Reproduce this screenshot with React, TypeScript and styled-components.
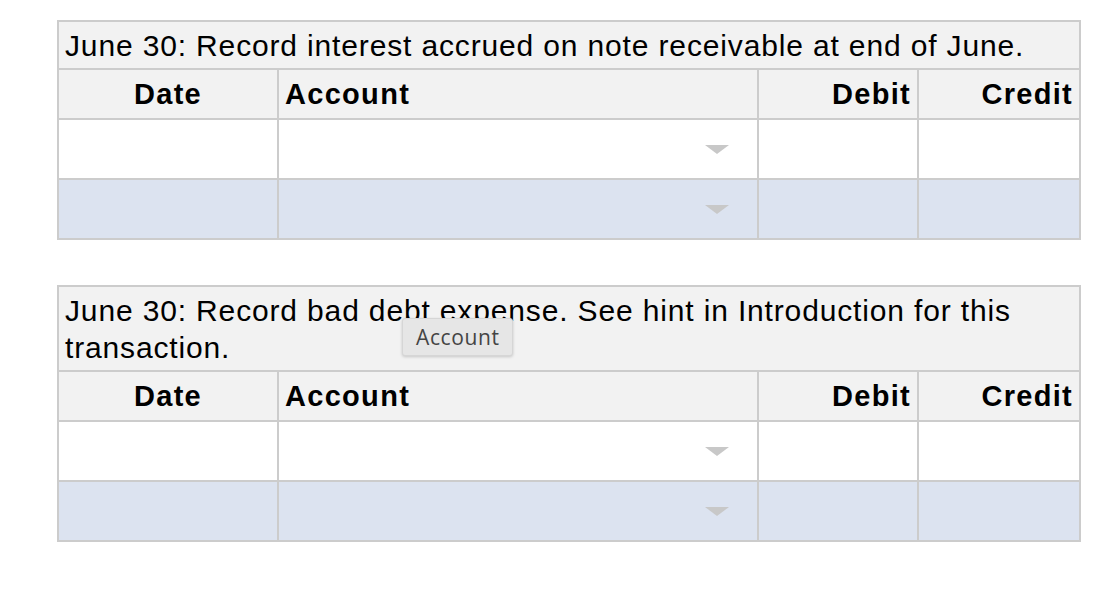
import styled, { createGlobalStyle } from "styled-components";

const GlobalStyle = createGlobalStyle`
  html, body {
    margin: 0;
    padding: 0;
    background: #ffffff;
    font-family: "Liberation Sans", Arial, sans-serif;
  }
`;

const Page = styled.div`
  display: flex;
  flex-direction: column;
  gap: 45px;
  padding: 20px 30px 0 57px;
  width: 1110px;
  box-sizing: border-box;
`;

const Journal = styled.table`
  width: 1022px;
  border-collapse: collapse;
  table-layout: fixed;
  border: 2px solid #cccccc;
`;

const TitleCell = styled.td`
  background: #f2f2f2;
  border: 2px solid #cccccc;
  padding: 5px 6px 4px 6px;
  font-size: 30px;
  letter-spacing: 0.85px;
  line-height: 37px;
  color: #000;
  text-align: left;
  position: relative;
`;

const HeadCell = styled.th<{ $align: "left" | "center" | "right" }>`
  background: #f2f2f2;
  border: 2px solid #cccccc;
  height: 48px;
  padding: 0 6px;
  font-size: 29px;
  letter-spacing: 1.3px;
  font-weight: bold;
  color: #000;
  text-align: ${(p) => p.$align};
`;

const Cell = styled.td<{ $shaded: boolean }>`
  background: ${(p) => (p.$shaded ? "#dce3f0" : "#ffffff")};
  border: 2px solid #cccccc;
  height: 58px;
  padding: 0;
  position: relative;
`;

const Caret = styled.span`
  position: absolute;
  right: 28px;
  top: 50%;
  margin-top: -4px;
  width: 0;
  height: 0;
  border-left: 12px solid transparent;
  border-right: 12px solid transparent;
  border-top: 9px solid #c8c8c8;
`;

const Tooltip = styled.div`
  position: absolute;
  left: 343px;
  top: 31px;
  padding: 0 13px;
  height: 36px;
  line-height: 36px;
  background: #e6e6e6;
  border: 1px solid #d6d6d6;
  border-radius: 3px;
  box-shadow: 0 1px 3px rgba(0, 0, 0, 0.18);
  font-family: "Open Sans", "Noto Sans", sans-serif;
  font-size: 21px;
  letter-spacing: 0.6px;
  color: #444;
`;

interface EntryProps {
  title: string;
  tooltip?: string;
}

function Entry({ title, tooltip }: EntryProps) {
  const rows = [false, true];
  return (
    <Journal>
      <colgroup>
        <col style={{ width: 220 }} />
        <col style={{ width: 480 }} />
        <col style={{ width: 160 }} />
        <col style={{ width: 162 }} />
      </colgroup>
      <tbody>
        <tr>
          <TitleCell colSpan={4}>
            {title}
            {tooltip && <Tooltip>{tooltip}</Tooltip>}
          </TitleCell>
        </tr>
        <tr>
          <HeadCell $align="center">Date</HeadCell>
          <HeadCell $align="left">Account</HeadCell>
          <HeadCell $align="right">Debit</HeadCell>
          <HeadCell $align="right">Credit</HeadCell>
        </tr>
        {rows.map((shaded, i) => (
          <tr key={i}>
            <Cell $shaded={shaded} />
            <Cell $shaded={shaded}>
              <Caret />
            </Cell>
            <Cell $shaded={shaded} />
            <Cell $shaded={shaded} />
          </tr>
        ))}
      </tbody>
    </Journal>
  );
}

export default function App() {
  return (
    <>
      <GlobalStyle />
      <Page>
        <Entry title="June 30: Record interest accrued on note receivable at end of June." />
        <Entry
          title="June 30: Record bad debt expense. See hint in Introduction for this transaction."
          tooltip="Account"
        />
      </Page>
    </>
  );
}
